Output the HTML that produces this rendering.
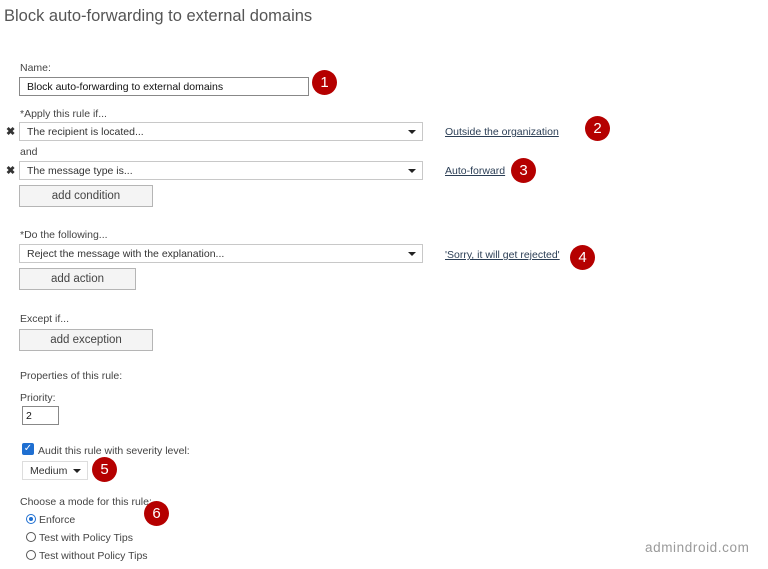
<!DOCTYPE html>
<html><head><style>
body{margin:0;width:768px;height:569px;background:#fff;font-family:"Liberation Sans",sans-serif;position:relative;overflow:hidden;color:#333}
.a{position:absolute;white-space:nowrap}
.l{font-size:10.5px;color:#444}
.box{position:absolute;border:1px solid #c8c8c8;background:#fff;box-sizing:border-box;font-size:10.5px;color:#333;padding-left:7px;line-height:18px}
.dd::after{content:"";position:absolute;right:6px;top:7px;border-left:4px solid transparent;border-right:4px solid transparent;border-top:4px solid #222}
.btn{position:absolute;border:1px solid #b5b5b5;background:#f4f4f4;box-sizing:border-box;font-size:11.5px;color:#444;text-align:center;line-height:21px}
.b{position:absolute;width:25px;height:25px;border-radius:50%;background:#b50000;color:#fff;font-size:15px;text-align:center;line-height:26px}
.lk{position:absolute;font-size:10.5px;color:#2b3e55;text-decoration:underline;white-space:nowrap}
.x{position:absolute;font-size:11px;font-weight:bold;color:#333}
.r{position:absolute;width:10px;height:10px;border:1px solid #555;border-radius:50%;box-sizing:border-box;background:#fff}
</style></head><body>
<div class="a" style="left:4px;top:7px;font-size:16.5px;color:#555">Block auto-forwarding to external domains</div>
<div class="a l" style="left:20px;top:62px">Name:</div>
<div class="box" style="left:19px;top:77px;width:290px;height:19px;border-color:#888;color:#111">Block auto-forwarding to external domains</div>
<div class="b" style="left:312px;top:70px">1</div>
<div class="a l" style="left:20px;top:108px">*Apply this rule if...</div>
<div class="x" style="left:6px;top:125px">✖</div>
<div class="box dd" style="left:19px;top:122px;width:404px;height:19px">The recipient is located...</div>
<div class="lk" style="left:445px;top:126px">Outside the organization</div>
<div class="b" style="left:585px;top:116px">2</div>
<div class="a l" style="left:20px;top:146px">and</div>
<div class="x" style="left:6px;top:164px">✖</div>
<div class="box dd" style="left:19px;top:161px;width:404px;height:19px">The message type is...</div>
<div class="lk" style="left:445px;top:165px">Auto-forward</div>
<div class="b" style="left:511px;top:158px">3</div>
<div class="btn" style="left:19px;top:185px;width:134px;height:22px">add condition</div>
<div class="a l" style="left:20px;top:229px">*Do the following...</div>
<div class="box dd" style="left:19px;top:244px;width:404px;height:19px">Reject the message with the explanation...</div>
<div class="lk" style="left:445px;top:249px">'Sorry, it will get rejected'</div>
<div class="b" style="left:570px;top:245px">4</div>
<div class="btn" style="left:19px;top:268px;width:117px;height:22px">add action</div>
<div class="a l" style="left:20px;top:313px">Except if...</div>
<div class="btn" style="left:19px;top:329px;width:134px;height:22px">add exception</div>
<div class="a l" style="left:20px;top:370px">Properties of this rule:</div>
<div class="a l" style="left:20px;top:392px">Priority:</div>
<div class="box" style="left:22px;top:406px;width:37px;height:19px;border-color:#888;padding-left:3px;color:#111">2</div>
<div class="a" style="left:22px;top:443px;width:12px;height:12px;background:#1f6fd1;border-radius:2px;color:#fff;font-size:10px;line-height:12px;text-align:center">✓</div>
<div class="a l" style="left:38px;top:445px">Audit this rule with severity level:</div>
<div class="box dd" style="left:22px;top:461px;width:66px;height:19px;border-color:#ddd">Medium</div>
<div class="b" style="left:92px;top:457px">5</div>
<div class="a l" style="left:20px;top:496px">Choose a mode for this rule:</div>
<div class="b" style="left:144px;top:501px">6</div>
<div class="r" style="left:26px;top:514px;border-color:#1f6fd1"><div style="position:absolute;left:2px;top:2px;width:4px;height:4px;border-radius:50%;background:#1f6fd1"></div></div>
<div class="a l" style="left:39px;top:514px">Enforce</div>
<div class="r" style="left:26px;top:532px"></div>
<div class="a l" style="left:39px;top:532px">Test with Policy Tips</div>
<div class="r" style="left:26px;top:550px"></div>
<div class="a l" style="left:39px;top:550px">Test without Policy Tips</div>
<div class="a" style="left:645px;top:540px;font-size:13.5px;color:#9a9a9a;letter-spacing:0.6px">admindroid.com</div>
</body></html>
